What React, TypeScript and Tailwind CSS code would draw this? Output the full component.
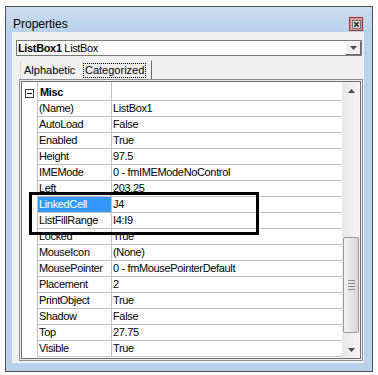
import React from "react";

const rows: [string, string][] = [
  ["(Name)", "ListBox1"],
  ["AutoLoad", "False"],
  ["Enabled", "True"],
  ["Height", "97.5"],
  ["IMEMode", "0 - fmIMEModeNoControl"],
  ["Left", "203.25"],
  ["LinkedCell", "J4"],
  ["ListFillRange", "I4:I9"],
  ["Locked", "True"],
  ["MouseIcon", "(None)"],
  ["MousePointer", "0 - fmMousePointerDefault"],
  ["Placement", "2"],
  ["PrintObject", "True"],
  ["Shadow", "False"],
  ["Top", "27.75"],
  ["Visible", "True"],
];

const font = { fontFamily: '"Liberation Sans", Arial, sans-serif' };

function Triangle({ up }: { up?: boolean }) {
  return (
    <svg width="7" height="4" viewBox="0 0 7 4">
      {up ? (
        <path d="M0 4 L3.5 0 L7 4 Z" fill="#4a4a4a" />
      ) : (
        <path d="M0 0 L7 0 L3.5 4 Z" fill="#4a4a4a" />
      )}
    </svg>
  );
}

export default function App() {
  return (
    <div
      className="relative w-[378px] h-[375px] bg-white overflow-hidden pl-[5px] pt-[6px] text-[11px] text-black"
      style={font}
    >
      {/* ================= WINDOW ================= */}
      <div className="w-[368px] h-[366px] border border-[#505050] bg-[#b9d1ea] flex flex-col">
        {/* title bar */}
        <div className="h-[25px] flex items-start justify-between pt-[10px] pl-[7px] pr-[9px] bg-gradient-to-b from-[#cbdcf1] to-[#b9d1ea]">
          <span className="text-[12px] leading-[14px] text-black">Properties</span>
          <div className="w-[14px] h-[14px] border border-[#9b3030] bg-[#e79a9a] flex items-center justify-center">
            <div className="w-[9px] h-[9px] bg-[#dcdcdc] border border-[#707070] flex items-center justify-center">
              <svg width="5" height="5" viewBox="0 0 5 5">
                <path d="M0 0 L5 5 M5 0 L0 5" stroke="#202020" strokeWidth="1.4" />
              </svg>
            </div>
          </div>
        </div>

        {/* body */}
        <div className="flex-1 flex pl-[6px] pr-[8px] pb-[8px]">
          <div className="flex-1 bg-[#f0f0f0] flex flex-col tracking-[-0.35px]">
            {/* combo box */}
            <div className="mt-[8px] ml-[4px] w-[346px] h-[16px] border border-[#7a7a7a] bg-white flex items-center justify-between">
              <div className="pl-[1px] leading-[13px] whitespace-nowrap">
                <span className="font-bold">ListBox1</span> ListBox
              </div>
              <div className="w-[16px] h-[14px] bg-[#f0f0f0] border-t border-l border-white border-r border-b border-r-[#696969] border-b-[#696969] flex items-center justify-center">
                <Triangle />
              </div>
            </div>

            {/* tabs */}
            <div className="mt-[4px] ml-[8px] h-[19px] flex items-end tracking-normal">
              <div className="w-[60px] h-[17px] border-l border-[#d8d8d8] flex items-center pl-[3px]">
                Alphabetic
              </div>
              <div className="w-[72px] h-[19px] border-t border-l border-white border-r border-r-[#696969] bg-[#f0f0f0] flex items-center pl-[2px]">
                <span className="border border-dotted border-black px-[1px] leading-[13px]">
                  Categorized
                </span>
              </div>
            </div>

            {/* ================= GRID ================= */}
            <div className="ml-[7px] w-[344px] h-[282px] border border-[#8c8c8c] p-px bg-[#f0f0f0]">
              <div className="h-full border border-[#6d6d6d] bg-white flex">
                <div className="flex-1 flex flex-col">
                  <div className="h-[3px] flex">
                    <div className="w-[16px] border-r border-[#c0c0c0]" />
                    <div className="w-[74px] border-r border-[#c0c0c0]" />
                    <div className="flex-1" />
                  </div>

                  <div className="h-[16px] flex">
                    <div className="w-[16px] border-r border-[#c0c0c0] flex items-center justify-center">
                      <div className="w-[9px] h-[9px] border border-[#404040] flex items-center justify-center">
                        <div className="w-[5px] h-px bg-black" />
                      </div>
                    </div>
                    <div className="w-[74px] border-r border-b border-[#c0c0c0] pl-[2px] font-bold leading-[15px]">
                      Misc
                    </div>
                    <div className="flex-1 border-b border-[#c0c0c0]" />
                  </div>

                  {rows.map(([name, value]) => {
                    const sel = name === "LinkedCell";
                    return (
                      <div key={name} className="h-[16px] flex">
                        <div className="w-[16px] border-r border-[#c0c0c0]" />
                        <div
                          className={
                            sel
                              ? "w-[74px] border-r border-b border-[#c0c0c0] bg-[#3399ff] text-white pl-[1px] leading-[15px] whitespace-nowrap"
                              : "w-[74px] border-r border-b border-[#c0c0c0] pl-[1px] leading-[15px] whitespace-nowrap"
                          }
                        >
                          {name}
                        </div>
                        <div className="flex-1 border-b border-[#c0c0c0] pl-[1px] leading-[15px] whitespace-nowrap overflow-hidden">
                          {value}
                        </div>
                      </div>
                    );
                  })}
                </div>

                {/* scrollbar */}
                <div className="w-[18px] flex flex-col bg-gradient-to-r from-[#e8e8e8] to-[#f4f4f4]">
                  <div className="h-[17px] flex items-center justify-center">
                    <Triangle up />
                  </div>
                  <div className="h-[138px]" />
                  <div className="mx-[1px] h-[96px] rounded-[2px] border border-[#9a9a9a] bg-gradient-to-r from-[#f2f2f2] to-[#d6d6d6] flex flex-col items-center justify-center gap-[2px]">
                    <div className="w-[7px] h-px bg-[#8a8a8a]" />
                    <div className="w-[7px] h-px bg-[#8a8a8a]" />
                    <div className="w-[7px] h-px bg-[#8a8a8a]" />
                    <div className="w-[7px] h-px bg-[#8a8a8a]" />
                  </div>
                  <div className="flex-1" />
                  <div className="h-[17px] flex items-center justify-center">
                    <Triangle />
                  </div>
                </div>
              </div>
            </div>
          </div>
        </div>
      </div>

      {/* highlight box drawn over the grid */}
      <div className="absolute left-[29px] top-[192px] w-[230px] h-[43px] border-[3px] border-black" />
    </div>
  );
}
